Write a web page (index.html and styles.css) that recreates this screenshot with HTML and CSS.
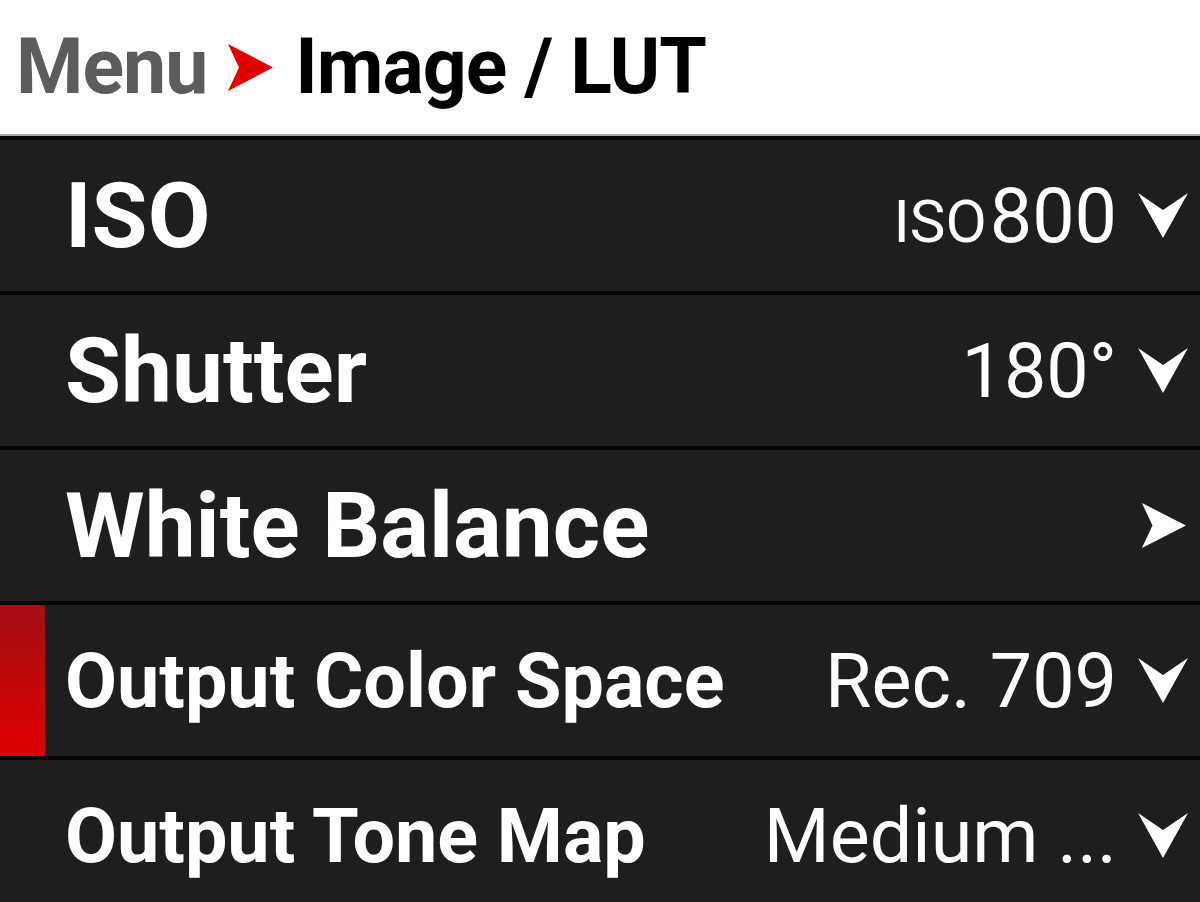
FILE: index.html
```html
<!DOCTYPE html>
<html lang="en">
<head>
  <meta charset="UTF-8" />
  <meta name="viewport" content="width=device-width, initial-scale=1" />
  <title>Image / LUT</title>
  <link rel="stylesheet" href="styles.css">
</head>
<body>
<header class="crumbs">
  <span class="crumb-parent">Menu</span>
  <svg class="crumb-arrow" viewBox="0 0 45 47" aria-hidden="true"><path d="M0 0 L45 23.5 L0 47 L11 23.5 Z" /></svg>
  <h1 class="crumb-current">Image / LUT</h1>
</header>

<main class="menu">
  <div class="row">
    <span class="label">ISO</span>
    <span class="value"><span class="unit">ISO</span>800</span>
    <svg class="icon" viewBox="0 0 50 45" aria-hidden="true"><path d="M0 0 L25 17 L50 0 L25 45 Z" /></svg>
  </div>
  <div class="row">
    <span class="label">Shutter</span>
    <span class="value">180°</span>
    <svg class="icon" viewBox="0 0 50 45" aria-hidden="true"><path d="M0 0 L25 17 L50 0 L25 45 Z" /></svg>
  </div>
  <div class="row">
    <span class="label">White Balance</span>
    <span class="value"></span>
    <svg class="icon" viewBox="0 0 50 47" aria-hidden="true"><path d="M3 0 L49 23.5 L3 47 L14 23.5 Z" /></svg>
  </div>
  <div class="row selected">
    <span class="label label-sm">Output Color Space</span>
    <span class="value">Rec. 709</span>
    <svg class="icon" viewBox="0 0 50 45" aria-hidden="true"><path d="M0 0 L25 17 L50 0 L25 45 Z" /></svg>
  </div>
  <div class="row">
    <span class="label label-sm">Output Tone Map</span>
    <span class="value">Medium ...</span>
    <svg class="icon" viewBox="0 0 50 45" aria-hidden="true"><path d="M0 0 L25 17 L50 0 L25 45 Z" /></svg>
  </div>
</main>
</body>
</html>
```

FILE: styles.css
```css
:root {
  --panel: #1e1e1e;
  --divider: #050505;
  --text: #ffffff;
  --muted: #5c5c5c;
  --red: #e00000;
  --red-dark: #a10f13;
}

html, body {
  margin: 0;
  height: 100%;
  overflow: hidden;
}

body {
  font-family: Roboto, "Liberation Sans", sans-serif;
  background: var(--panel);
  color: var(--text);
}

/* breadcrumb header */
.crumbs {
  height: 134px;
  background: #fff;
  border-bottom: 2px solid #a8a8a8;
  display: flex;
  align-items: center;
  padding: 0 0 0 16px;
}

.crumb-parent {
  font-size: 77px;
  font-weight: 700;
  color: var(--muted);
  letter-spacing: -1px;
}

.crumb-arrow {
  width: 47px;
  height: 47px;
  margin: 0 21px 0 20px;
  fill: var(--red);
}

.crumb-current {
  margin: 0;
  font-size: 77px;
  font-weight: 700;
  color: #000;
  letter-spacing: -1px;
}

/* settings list */
.menu {
  display: flex;
  flex-direction: column;
}

.row {
  height: 151px;
  border-top: 4px solid var(--divider);
  display: flex;
  align-items: center;
  padding: 0 12px 0 65px;
}

.row.selected {
  background: linear-gradient(to bottom, var(--red-dark), var(--red)) no-repeat 0 0 / 45px 100%, var(--panel);
}

.label {
  font-weight: 700;
  font-size: 91px;
  white-space: nowrap;
}

.label-sm { font-size: 75.5px; }

.value {
  margin-left: auto;
  font-size: 75.5px;
  font-weight: 400;
  white-space: nowrap;
}

.unit {
  font-size: 60px;
  margin-right: 3px;
}

.icon {
  width: 50px;
  height: 45px;
  margin-left: 21px;
  fill: var(--text);
  flex-shrink: 0;
}
```
